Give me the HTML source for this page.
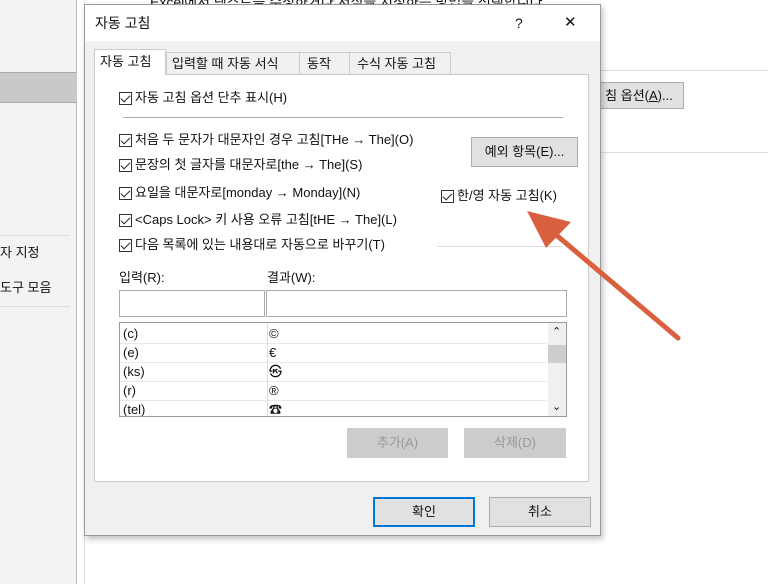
<!DOCTYPE html><html><head><meta charset="utf-8"><style>
*{margin:0;padding:0;box-sizing:border-box}
body{width:768px;height:584px;overflow:hidden;background:#fff;position:relative;font-family:"Liberation Sans","Noto Sans CJK KR",sans-serif;font-size:13px;color:#111}
.a{position:absolute}
.cb{position:absolute;width:13px;height:13px;border:1px solid #333;background:#fff}
.cb:after{content:"";position:absolute;left:3px;top:0px;width:4px;height:8px;border:solid #222;border-width:0 1.5px 1.5px 0;transform:rotate(45deg)}
.t{position:absolute;white-space:nowrap;line-height:16px}
.btn{position:absolute;background:#e1e1e1;border:1px solid #adadad;text-align:center}
.row{position:absolute;left:0;width:427px;height:19px;border-bottom:1px solid #e8e8e8;line-height:18px}
</style></head><body>
<div class="a" style="left:0;top:0;width:77px;height:584px;background:#f3f3f3;border-right:1px solid #bbb"></div>
<div class="a" style="left:0;top:72px;width:77px;height:31px;background:#c9c9c9;border-top:1px solid #aaa;border-bottom:1px solid #aaa"></div>
<div class="a" style="left:0;top:235px;width:70px;height:1px;background:#ddd"></div>
<div class="a" style="left:0;top:306px;width:70px;height:1px;background:#ddd"></div>
<div class="t" style="left:0;top:245px">자 지정</div>
<div class="t" style="left:0;top:280px">도구 모음</div>
<div class="a" style="left:84px;top:0;width:1px;height:584px;background:#ddd"></div>
<div class="t" style="left:150px;top:-6px;font-size:14px">Excel에서 텍스트를 수정하거나 서식을 지정하는 방법을 선택합니다.</div>
<div class="a" style="left:601px;top:70px;width:167px;height:1px;background:#ddd"></div>
<div class="a" style="left:601px;top:152px;width:167px;height:1px;background:#ddd"></div>
<div class="btn" style="left:580px;top:82px;width:104px;height:27px;line-height:25px;padding-left:14px">침 옵션(<u>A</u>)...</div>

<div class="a" style="left:84px;top:4px;width:517px;height:532px;background:#f0f0f0;border:1px solid #999;box-shadow:2px 3px 6px rgba(0,0,0,.25)">
<div class="a" style="left:0;top:0;width:515px;height:36px;background:#fff"></div>
<div class="t" style="left:10px;top:10px;font-size:14px">자동 고침</div>
<div class="t" style="left:430px;top:10px;font-size:14px">?</div>
<div class="t" style="left:479px;top:10px;font-size:15px">✕</div>
<!-- tabs -->
<div class="a" style="left:9px;top:44px;width:72px;height:26px;background:#fff;border:1px solid #ccc;border-bottom:none"></div>
<div class="t" style="left:15px;top:49px">자동 고침</div>
<div class="a" style="left:81px;top:47px;width:285px;height:22px;background:#f0f0f0;border:1px solid #ccc;border-bottom:none"></div>
<div class="a" style="left:214px;top:47px;width:1px;height:22px;background:#ccc"></div>
<div class="a" style="left:264px;top:47px;width:1px;height:22px;background:#ccc"></div>
<div class="t" style="left:87px;top:51px">입력할 때 자동 서식</div>
<div class="t" style="left:222px;top:51px">동작</div>
<div class="t" style="left:272px;top:51px">수식 자동 고침</div>
<div class="a" style="left:9px;top:69px;width:495px;height:408px;background:#fff;border:1px solid #ccc;border-top-color:#ccc"></div>
<div class="a" style="left:10px;top:69px;width:70px;height:2px;background:#fff"></div>
<div class="cb" style="left:34px;top:87px"></div><div class="t" style="left:50px;top:85px">자동 고침 옵션 단추 표시(H)</div>
<div class="a" style="left:38px;top:112px;width:440px;height:1px;background:#aaa"></div>
<div class="cb" style="left:34px;top:129px"></div><div class="t" style="left:50px;top:127px">처음 두 문자가 대문자인 경우 고침[THe → The](O)</div>
<div class="cb" style="left:34px;top:154px"></div><div class="t" style="left:50px;top:152px">문장의 첫 글자를 대문자로[the → The](S)</div>
<div class="cb" style="left:34px;top:182px"></div><div class="t" style="left:50px;top:180px">요일을 대문자로[monday → Monday](N)</div>
<div class="cb" style="left:34px;top:209px"></div><div class="t" style="left:50px;top:207px">&lt;Caps Lock&gt; 키 사용 오류 고침[tHE → The](L)</div>
<div class="cb" style="left:34px;top:234px"></div><div class="t" style="left:50px;top:232px">다음 목록에 있는 내용대로 자동으로 바꾸기(T)</div>
<div class="a" style="left:352px;top:241px;width:126px;height:1px;background:#ddd"></div>
<div class="btn" style="left:386px;top:132px;width:107px;height:30px;line-height:28px">예외 항목(E)...</div>
<div class="cb" style="left:356px;top:185px"></div><div class="t" style="left:372px;top:183px">한/영 자동 고침(K)</div>
<div class="t" style="left:34px;top:265px">입력(R):</div>
<div class="t" style="left:182px;top:265px">결과(W):</div>
<div class="a" style="left:34px;top:285px;width:146px;height:27px;border:1px solid #aaa"></div>
<div class="a" style="left:181px;top:285px;width:301px;height:27px;border:1px solid #aaa"></div>
<div class="a" style="left:34px;top:317px;width:448px;height:95px;border:1px solid #999;overflow:hidden">
<div class="row" style="top:2px"><span style="padding-left:3px">(c)</span><span class="a" style="left:149px">©</span></div>
<div class="row" style="top:21px"><span style="padding-left:3px">(e)</span><span class="a" style="left:149px">€</span></div>
<div class="row" style="top:40px"><span style="padding-left:3px">(ks)</span><span class="a" style="left:149px">㉿</span></div>
<div class="row" style="top:59px"><span style="padding-left:3px">(r)</span><span class="a" style="left:149px">®</span></div>
<div class="row" style="top:78px;border:none"><span style="padding-left:3px">(tel)</span><span class="a" style="left:149px">☎</span></div>
<div class="a" style="left:147px;top:0;width:1px;height:95px;background:#ddd"></div>
<div class="a" style="left:428px;top:0;width:18px;height:93px;background:#f0f0f0"></div>
<div class="a" style="left:428px;top:22px;width:18px;height:18px;background:#cdcdcd"></div>
<div class="t" style="left:432px;top:1px;font-size:11px">⌃</div>
<div class="t" style="left:432px;top:76px;font-size:11px">⌄</div>
</div>
<div class="btn" style="left:262px;top:423px;width:101px;height:30px;line-height:28px;background:#ccc;border-color:#ccc;color:#999">추가(A)</div>
<div class="btn" style="left:379px;top:423px;width:102px;height:30px;line-height:28px;background:#ccc;border-color:#ccc;color:#999">삭제(D)</div>
<div class="btn" style="left:288px;top:492px;width:102px;height:30px;line-height:26px;border:2px solid #0078d7">확인</div>
<div class="btn" style="left:404px;top:492px;width:102px;height:30px;line-height:28px">취소</div>
</div>
<svg class="a" style="left:0;top:0" width="768" height="584"><line x1="678" y1="338" x2="548" y2="228" stroke="#d8603e" stroke-width="5" stroke-linecap="round"/><polygon points="527,211 571,222 546,248" fill="#d8603e"/></svg>
</body></html>
